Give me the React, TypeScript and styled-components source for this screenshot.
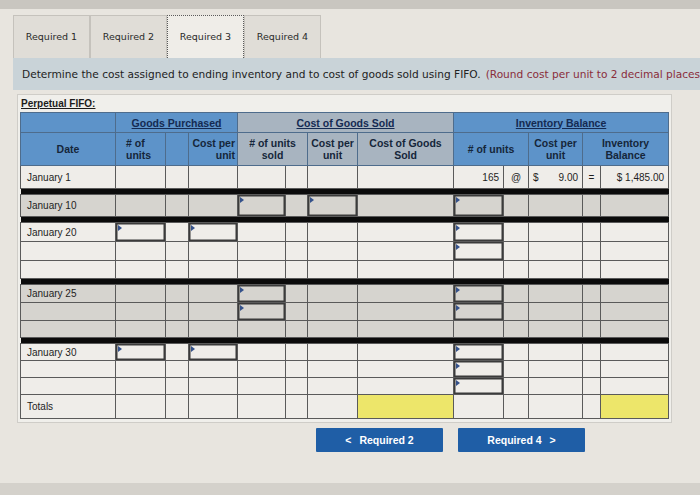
import React from 'react';
import styled, { createGlobalStyle } from 'styled-components';

const Global = createGlobalStyle`
  html, body { margin: 0; padding: 0; }
  body {
    width: 700px; height: 495px; overflow: hidden;
    background: #e7e4de;
    font-family: "Liberation Sans", Arial, sans-serif;
  }
`;

const Page = styled.div`
  width: 700px; height: 495px;
  display: flex; flex-direction: column;
  background: #e8e5df;
`;

const TopStrip = styled.div`
  height: 9px; background: #c9c6c0; flex-shrink: 0;
`;

const TabBar = styled.div`
  display: flex; padding: 6px 0 0 13px; height: 49px; box-sizing: border-box;
`;

const Tab = styled.div<{ $active?: boolean }>`
  width: 77px; height: 43px; box-sizing: border-box;
  display: flex; align-items: center; justify-content: center;
  font-family: "DejaVu Sans", Verdana, sans-serif; font-size: 9.5px; color: #2a2a2a;
  background: ${p => (p.$active ? '#efede8' : '#e0ddd7')};
  border: ${p => (p.$active ? '1.5px dotted #5a5a5a' : '1px solid #c5c2bc')};
  border-bottom: none;
  padding-bottom: 2px;
`;

const Instruction = styled.div`
  margin-left: 13px; height: 32px; background: #c9d3d8;
  display: flex; align-items: center; padding-left: 9px;
  font-family: "DejaVu Sans", Verdana, sans-serif; font-size: 10.6px; color: #222;
  white-space: nowrap; overflow: hidden;
`;

const Red = styled.span`
  color: #8a2d3b; margin-left: 5px;
`;

const Card = styled.div`
  margin: 4px 0 0 17px; width: 655px; box-sizing: border-box;
  background: #f0efeb; border: 1px solid #cfcdc8; padding: 2px 3px 3px 2px;
`;

const Title = styled.div`
  font-size: 10px; font-weight: bold; text-decoration: underline; color: #1c1c1c;
  height: 15px; line-height: 14px; padding-left: 1px;
`;

const Table = styled.table`
  width: 648px; border-collapse: collapse; table-layout: fixed;
  font-size: 10px; color: #1e1e1e;
`;

const HeadCell = styled.th<{ $tone: 'blue' | 'gray'; $align?: string; $h: number; $pad?: number }>`
  background: ${p => (p.$tone === 'blue' ? '#5d93c9' : '#a8b4c0')};
  border: 1px solid #4e6c8c;
  height: ${p => p.$h}px; padding: 0 ${p => p.$pad ?? 3}px; box-sizing: border-box;
  font-size: 10.5px; font-weight: bold; color: #15263a; line-height: 12px;
  text-align: ${p => p.$align || 'center'};
  vertical-align: middle;
  white-space: nowrap;
`;

const HeadTitle = styled.span`
  text-decoration: underline; color: #142a52;
`;

const Cell = styled.td<{ $shade: boolean; $h: number; $box?: boolean; $yellow?: boolean; $align?: string }>`
  position: relative;
  height: ${p => p.$h}px; padding: 0 4px; box-sizing: border-box;
  border: 1px solid #5a5a5a;
  background: ${p => (p.$yellow ? '#ede66a' : p.$shade ? '#d6d4cf' : '#efede9')};
  text-align: ${p => p.$align || 'left'};
  white-space: nowrap;
  box-shadow: ${p => (p.$box ? 'inset 0 0 0 1.5px #3b3b3b' : 'none')};
  &::before {
    content: '';
    display: ${p => (p.$box ? 'block' : 'none')};
    position: absolute; top: 2px; left: 2px;
    border-top: 3px solid transparent; border-bottom: 3px solid transparent;
    border-left: 4px solid #34518a;
  }
`;

const SepCell = styled.td`
  height: 5px; padding: 0; background: #0b0b0b; border: none;
`;

const Money = styled.span`
  display: flex; justify-content: space-between;
`;

const ButtonRow = styled.div`
  display: flex; gap: 15px; padding-left: 316px; margin-top: 5px;
`;

const NavButton = styled.div`
  width: 127px; height: 24px; background: #1f5ea6;
  display: flex; align-items: center; justify-content: center; gap: 8px;
  color: #fff; font-size: 10.5px; font-weight: bold;
  border-radius: 1px;
`;

const BottomStrip = styled.div`
  margin-top: auto; height: 12px; background: #d4d1cb;
`;

const widths = [95, 50, 23, 49, 48, 22, 50, 96, 50, 25, 54, 18, 68];

type Row = {
  label?: string;
  shade: boolean;
  h: number;
  boxes?: number[];
  yellow?: number[];
  jan1?: boolean;
} | { sep: true };

const rows: Row[] = [
  { label: 'January 1', shade: false, h: 23, jan1: true },
  { sep: true },
  { label: 'January 10', shade: true, h: 22, boxes: [4, 6, 8] },
  { sep: true },
  { label: 'January 20', shade: false, h: 19, boxes: [1, 3, 8] },
  { shade: false, h: 19, boxes: [8] },
  { shade: false, h: 18 },
  { sep: true },
  { label: 'January 25', shade: true, h: 18, boxes: [4, 8] },
  { shade: true, h: 18, boxes: [4, 8] },
  { shade: true, h: 17 },
  { sep: true },
  { label: 'January 30', shade: false, h: 17, boxes: [1, 3, 8] },
  { shade: false, h: 17, boxes: [8] },
  { shade: false, h: 17, boxes: [8] },
  { label: 'Totals', shade: false, h: 24, yellow: [7, 12] },
];

function jan1Content(i: number): React.ReactNode {
  if (i === 8) return '165';
  if (i === 9) return '@';
  if (i === 10) return <Money><span>$</span><span>9.00</span></Money>;
  if (i === 11) return '=';
  if (i === 12) return '$ 1,485.00';
  return null;
}

const jan1Align: Record<number, string> = { 8: 'right', 9: 'center', 11: 'center', 12: 'right' };

export default function App() {
  return (
    <Page>
      <Global />
      <TopStrip />
      <TabBar>
        <Tab>Required 1</Tab>
        <Tab>Required 2</Tab>
        <Tab $active>Required 3</Tab>
        <Tab>Required 4</Tab>
      </TabBar>
      <Instruction>
        Determine the cost assigned to ending inventory and to cost of goods sold using FIFO.
        <Red>(Round cost per unit to 2 decimal places.)</Red>
      </Instruction>
      <Card>
        <Title>Perpetual FIFO:</Title>
        <Table>
          <colgroup>
            {widths.map((w, i) => <col key={i} style={{ width: w }} />)}
          </colgroup>
          <thead>
            <tr>
              <HeadCell $tone="blue" $h={20} />
              <HeadCell $tone="blue" $h={20} colSpan={3}><HeadTitle>Goods Purchased</HeadTitle></HeadCell>
              <HeadCell $tone="gray" $h={20} colSpan={4}><HeadTitle>Cost of Goods Sold</HeadTitle></HeadCell>
              <HeadCell $tone="blue" $h={20} colSpan={5}><HeadTitle>Inventory Balance</HeadTitle></HeadCell>
            </tr>
            <tr>
              <HeadCell $tone="blue" $h={33}>Date</HeadCell>
              <HeadCell $tone="blue" $h={33} $align="left" $pad={10}># of<br />units</HeadCell>
              <HeadCell $tone="blue" $h={33} />
              <HeadCell $tone="blue" $h={33} $align="right" $pad={2}>Cost per<br />unit</HeadCell>
              <HeadCell $tone="gray" $h={33} colSpan={2}># of units<br />sold</HeadCell>
              <HeadCell $tone="gray" $h={33} $pad={1}>Cost per<br />unit</HeadCell>
              <HeadCell $tone="gray" $h={33}>Cost of Goods<br />Sold</HeadCell>
              <HeadCell $tone="blue" $h={33} colSpan={2}># of units</HeadCell>
              <HeadCell $tone="blue" $h={33}>Cost per<br />unit</HeadCell>
              <HeadCell $tone="blue" $h={33} colSpan={2}>Inventory<br />Balance</HeadCell>
            </tr>
          </thead>
          <tbody>
            {rows.map((r, ri) => {
              if ('sep' in r) {
                return <tr key={ri}><SepCell colSpan={13} /></tr>;
              }
              return (
                <tr key={ri}>
                  {widths.map((_, ci) => {
                    if (ci === 0) {
                      return <Cell key={ci} $shade={r.shade} $h={r.h} style={{ paddingLeft: 6 }}>{r.label}</Cell>;
                    }
                    return (
                      <Cell
                        key={ci}
                        $shade={r.shade}
                        $h={r.h}
                        $box={r.boxes?.includes(ci)}
                        $yellow={r.yellow?.includes(ci)}
                        $align={r.jan1 ? jan1Align[ci] : undefined}
                      >
                        {r.jan1 ? jan1Content(ci) : null}
                      </Cell>
                    );
                  })}
                </tr>
              );
            })}
          </tbody>
        </Table>
      </Card>
      <ButtonRow>
        <NavButton><span>&lt;</span><span>Required 2</span></NavButton>
        <NavButton><span>Required 4</span><span>&gt;</span></NavButton>
      </ButtonRow>
      <BottomStrip />
    </Page>
  );
}
